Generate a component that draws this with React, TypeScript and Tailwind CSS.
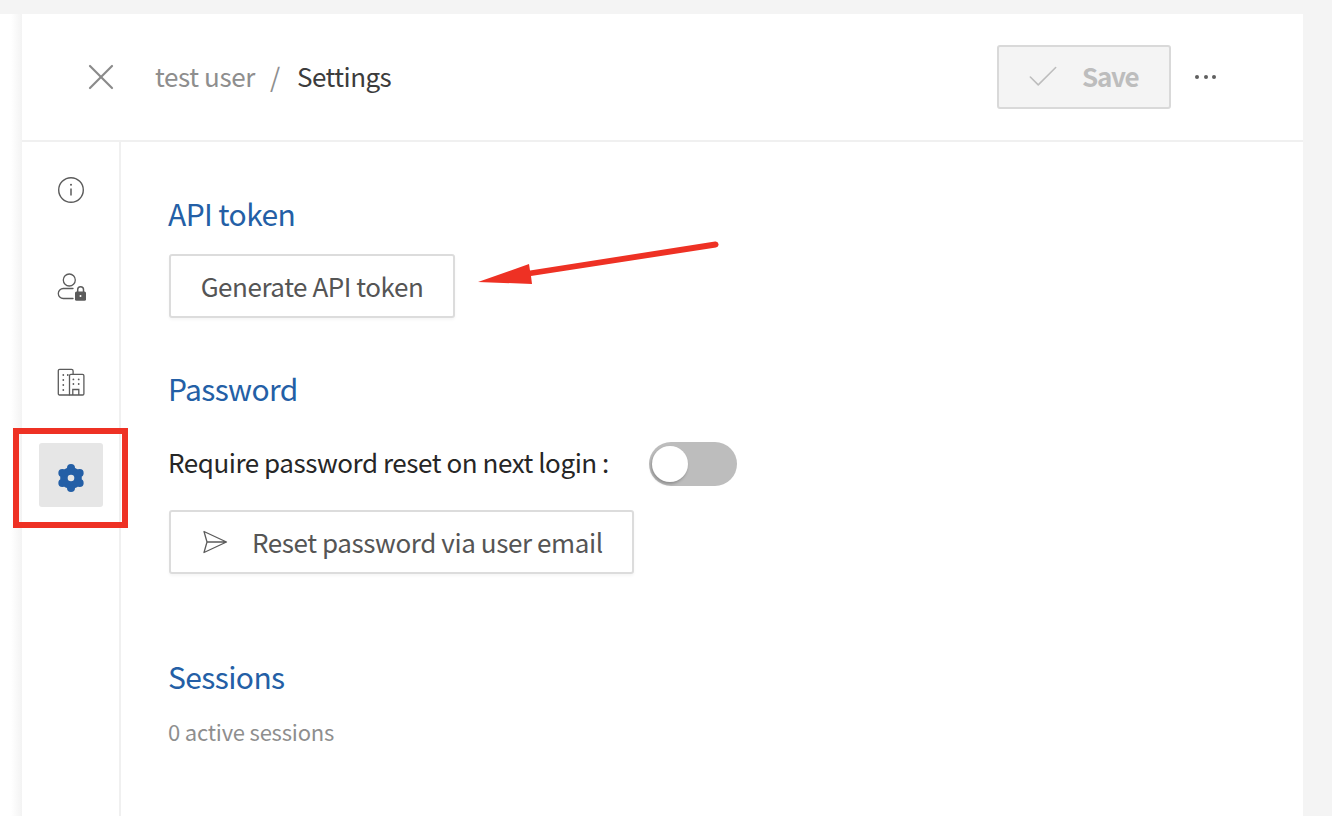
import { X, Check } from 'lucide-react';

const font = { fontFamily: '"Noto Sans CJK SC", "Noto Sans", sans-serif' };

const InfoIcon = () => (
    <svg width="28" height="28" viewBox="0 0 28 28" fill="none" stroke="#5b5b5b" strokeWidth="1.4">
        <circle cx="14" cy="14" r="12.3" />
        <path d="M14 12.500v7" strokeWidth="1.500" />
        <circle cx="14" cy="8.800" r="1" fill="#5b5b5b" stroke="none" />
    </svg>
);

const UserLockIcon = () => (
    <svg width="30" height="30" viewBox="0 0 30 30" fill="none" stroke="#5b5b5b" strokeWidth="1.3">
        <circle cx="13.300" cy="8" r="6" />
        <path d="M17 16.500h-9.700a5 5 0 0 0 0 10H17" strokeLinecap="round" />
        <path d="M21.700 20v-2.400a2.900 2.900 0 0 1 5.800 0V20" strokeWidth="1.500" />
        <rect x="19" y="19.500" width="11" height="9.300" rx="1.500" fill="#5b5b5b" stroke="none" />
        <circle cx="24.500" cy="24" r="1" fill="#fff" stroke="none" />
    </svg>
);

const BuildingsIcon = () => (
    <svg width="28" height="28" viewBox="0 0 28 28" fill="none" stroke="#5b5b5b" strokeWidth="1.300">
        <path d="M12.500 27H2.500c-.7 0-1.200-.5-1.200-1.200V2.700c0-.8.600-1.400 1.400-1.400h11.800c.9 0 1.600.7 1.600 1.600v3.500" />
        <path d="M12.500 27V7.700c0-.8.600-1.400 1.400-1.400h11.600c.8 0 1.400.6 1.400 1.400v18c0 .7-.6 1.300-1.300 1.300z" />
        <path d="M15.800 27v-5.500h6V27" />
        <path d="M6.300 7v.1M10.800 7v.1M6.300 12v.1M6.300 17v.1M6.300 22v.1M16.400 11.300v.1M21.700 11.300v.1M16.400 16v.1M21.700 16v.1" strokeWidth="1.800" strokeLinecap="round" />
    </svg>
);

// six blunt teeth around a small hole
const GearIcon = () => (
    <svg width="28" height="28" viewBox="0 0 28 28" fill="#245fa6">
        <circle cx="14" cy="14" r="10.800" />
        <circle cx="14" cy="4" r="4" />
        <circle cx="14" cy="24" r="4" />
        <circle cx="5.340" cy="9" r="4" />
        <circle cx="22.660" cy="9" r="4" />
        <circle cx="5.340" cy="19" r="4" />
        <circle cx="22.660" cy="19" r="4" />
        <circle cx="14" cy="14" r="3.300" fill="#e6e6e6" />
    </svg>
);

const App = () => {
    return (
        <div className="relative h-[816px] w-[1332px] overflow-hidden bg-[#f4f4f4] pt-[14px]" style={font}>
            <div className="absolute bottom-0 left-0 top-[14px] w-[22px] bg-gradient-to-r from-white from-50% to-[#f3f3f3]" />
            <div className="relative ml-[22px] flex h-[802px] w-[1281px] flex-col bg-white">
                {/* top bar */}
                <div className="flex h-[128px] shrink-0 items-center border-b-2 border-[#f0f0f0]">
                    <X className="ml-[57px] h-[44px] w-[44px] text-[#8a8a8a]" strokeWidth={1.2} />
                    <span className="mb-[3px] ml-[32px] text-[26px] leading-[36px] tracking-[-0.4px] text-[#8e8e8e]">test user</span>
                    <span className="mb-[3px] ml-[15px] text-[26px] leading-[36px] text-[#8e8e8e]">/</span>
                    <span className="mb-[3px] ml-[17px] text-[26px] leading-[36px] tracking-[-0.55px] text-[#3c3c3c]">Settings</span>
                    <button className="ml-auto flex h-[64px] w-[174px] items-center rounded-[3px] border-2 border-[#d9d9d9] bg-[#f4f4f4] pl-[25px] text-[26px] font-bold leading-[36px] tracking-[-1.3px] text-[#bdbdbd]">
                        <Check className="h-[38px] w-[38px] text-[#bdbdbd]" strokeWidth={1} />
                        <span className="mb-[2px] ml-[20px]">Save</span>
                    </button>
                    <div className="ml-[24px] mr-[87px] flex w-[21px] justify-between">
                        <span className="h-[4px] w-[4px] rounded-full bg-[#5f5f5f]" />
                        <span className="h-[4px] w-[4px] rounded-full bg-[#5f5f5f]" />
                        <span className="h-[4px] w-[4px] rounded-full bg-[#5f5f5f]" />
                    </div>
                </div>

                <div className="flex min-h-0 flex-1">
                    {/* sidebar */}
                    <div className="flex w-[99px] shrink-0 flex-col items-center border-r-2 border-[#f0f0f0] pl-[1px] pt-[34px]">
                        <div className="h-[28px]"><InfoIcon /></div>
                        <div className="mt-[68px] h-[30px]"><UserLockIcon /></div>
                        <div className="mt-[66px] h-[28px]"><BuildingsIcon /></div>
                        <div className="mt-[47px] flex h-[64px] w-[64px] items-center justify-center rounded-[3px] bg-[#e6e6e6] pt-[6px]">
                            <GearIcon />
                        </div>
                    </div>

                    {/* content */}
                    <div className="flex-1 pl-[48px] pt-[51px]">
                        <h2 className="-ml-[1px] text-[30px] leading-[40px] tracking-[-0.6px] text-[#245fa6]">API token</h2>
                        <button className="mt-[21px] h-[64px] w-[286px] rounded-[3px] border-2 border-[#dcdcdc] bg-white text-[26px] leading-[36px] tracking-[-0.45px] text-[#555555] shadow-[0_2px_3px_rgba(0,0,0,0.04)]">
                            Generate API token
                        </button>
                        <h2 className="-ml-[1px] mt-[50px] text-[30px] leading-[40px] tracking-[-0.6px] text-[#245fa6]">Password</h2>
                        <div className="-ml-[1px] mt-[34px] flex h-[44px] items-center">
                            <span className="mb-[5px] text-[26px] leading-[36px] tracking-[-0.45px] text-[#262626]">Require password reset on next login :</span>
                            <div className="relative ml-[40px] h-[44px] w-[88px] rounded-full bg-[#bdbdbd]">
                                <span className="absolute left-[3px] top-[4px] h-[36px] w-[36px] rounded-full bg-white shadow-[-1px_2px_3px_rgba(0,0,0,0.25)]" />
                            </div>
                        </div>
                        <button className="mt-[24px] flex h-[64px] w-[465px] items-center rounded-[3px] border-2 border-[#dcdcdc] bg-white pl-[31px] text-[26px] leading-[36px] tracking-[-0.41px] text-[#555555] shadow-[0_2px_3px_rgba(0,0,0,0.04)]">
                            <svg width="26" height="26" viewBox="0 0 26 26" fill="none" stroke="#5b5b5b" strokeWidth="1.3" strokeLinejoin="round"><path d="M2 2.500 24.500 13 2 23.500 5 13zM5 13h19.500" /></svg>
                            <span className="ml-[24px]">Reset password via user email</span>
                        </button>
                        <h2 className="-ml-[1px] mt-[82px] text-[30px] leading-[40px] tracking-[-0.6px] text-[#245fa6]">Sessions</h2>
                        <p className="-ml-[1px] mt-[20px] text-[22px] leading-[30px] tracking-[-0.2px] text-[#8e8e8e]">0 active sessions</p>
                    </div>
                </div>
            </div>

            {/* screenshot annotations */}
            <div className="absolute left-[13px] top-[428px] h-[100px] w-[115px] border-[6px] border-[#ee3124]" />
            <svg className="absolute left-[470px] top-[232px]" width="256" height="60" viewBox="0 0 256 60" fill="#ee3124">
                <path d="M8 50 59 32 60 38.500 245 9.500a3 3 0 0 1 1 6L61 44 62 52z" />
            </svg>
        </div>
    );
};

export default App;
